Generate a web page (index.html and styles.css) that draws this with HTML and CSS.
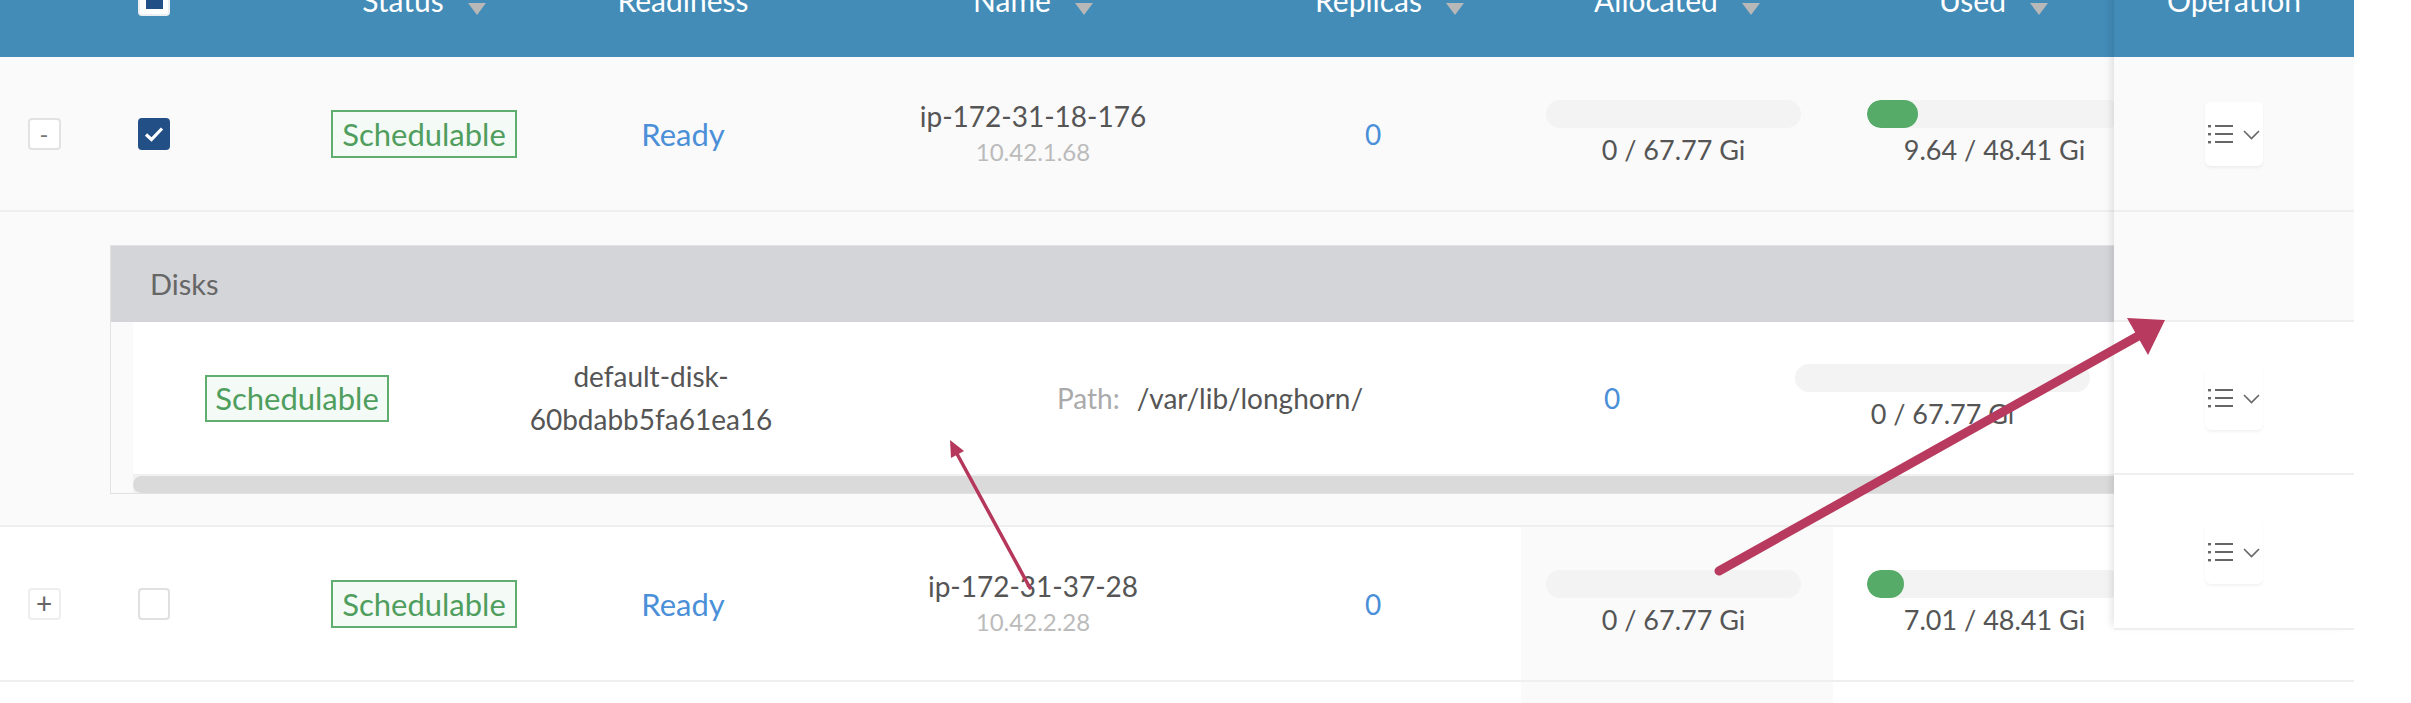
FILE: index.html
```html
<!DOCTYPE html>
<html lang="en">
<head>
    <meta charset="UTF-8">
    <title>Nodes</title>
    <link rel="stylesheet" href="styles.css">
</head>
<body>
<div class="page">
    <div class="table">
        <div class="thead grid">
            <div class="cell"></div>
            <div class="cell"><span class="check check-partial"><i></i></span></div>
            <div class="cell">Status<span class="sort"></span></div>
            <div class="cell">Readiness</div>
            <div class="cell">Name<span class="sort"></span></div>
            <div class="cell col-replicas">Replicas<span class="sort"></span></div>
            <div class="cell">Allocated<span class="sort"></span></div>
            <div class="cell">Used<span class="sort"></span></div>
            <div class="cell">Operation</div>
        </div>

        <div class="tr grid tr-grey">
            <div class="cell"><span class="expander">-</span></div>
            <div class="cell">
                <span class="check check-on">
                    <svg width="20" height="16" viewBox="0 0 20 16"><path d="M2 8.5 L7.5 13.5 L18 2.5" fill="none" stroke="#fff" stroke-width="3.2"/></svg>
                </span>
            </div>
            <div class="cell"><span class="tag">Schedulable</span></div>
            <div class="cell"><span class="link">Ready</span></div>
            <div class="cell">
                <span class="host">ip-172-31-18-176</span>
                <span class="ip">10.42.1.68</span>
            </div>
            <div class="cell col-replicas"><span class="num">0</span></div>
            <div class="cell usage alloc">
                <div class="bar"><div class="fill" style="width:0%"></div></div>
                <div class="usage-text">0 / 67.77 Gi</div>
            </div>
            <div class="cell usage used">
                <div class="bar"><div class="fill" style="width:19.9%"></div></div>
                <div class="usage-text">9.64 / 48.41 Gi</div>
            </div>
            <div class="cell"></div>
        </div>

        <div class="expanded">
            <div class="disks">
                <div class="disks-head">Disks</div>
                <div class="disks-body">
                    <div class="disk-row">
                        <div class="cell"><span class="tag tag-sm">Schedulable</span></div>
                        <div class="cell"><span class="disk-name">default-disk-<wbr>60bdabb5fa61ea16</span></div>
                        <div class="cell"><span class="path-label">Path:</span><span>/var/lib/longhorn/</span></div>
                        <div class="cell col-disk-replicas"><span class="num">0</span></div>
                        <div class="cell usage disk-usage">
                            <div class="bar"><div class="fill" style="width:0%"></div></div>
                            <div class="usage-text">0 / 67.77 Gi</div>
                        </div>
                    </div>
                    <div class="scroll-track"><div class="scroll-thumb"></div></div>
                </div>
            </div>
        </div>

        <div class="tr grid">
            <div class="cell"><span class="expander expander-plus">+</span></div>
            <div class="cell"><span class="check"></span></div>
            <div class="cell"><span class="tag">Schedulable</span></div>
            <div class="cell"><span class="link">Ready</span></div>
            <div class="cell">
                <span class="host">ip-172-31-37-28</span>
                <span class="ip">10.42.2.28</span>
            </div>
            <div class="cell col-replicas"><span class="num">0</span></div>
            <div class="cell usage alloc sorted">
                <div class="bar"><div class="fill" style="width:0%"></div></div>
                <div class="usage-text">0 / 67.77 Gi</div>
            </div>
            <div class="cell usage used">
                <div class="bar"><div class="fill" style="width:14.5%"></div></div>
                <div class="usage-text">7.01 / 48.41 Gi</div>
            </div>
            <div class="cell"></div>
        </div>

        <div class="tr grid">
            <div class="cell"></div><div class="cell"></div><div class="cell"></div>
            <div class="cell"></div><div class="cell"></div><div class="cell"></div>
            <div class="cell sorted"></div><div class="cell"></div><div class="cell"></div>
        </div>
    </div>

    <!-- fixed right column, drawn over the table -->
    <div class="fixed">
        <div class="fixed-head">Operation</div>
        <div class="fixed-row fr-1 tr-grey">
            <span class="op">
                <svg width="25" height="20" viewBox="0 0 25 20"><g fill="#666"><rect x="0" y="1" width="3" height="2.4"/><rect x="7" y="1" width="18" height="2"/><rect x="0" y="9" width="3" height="2.4"/><rect x="7" y="9" width="18" height="2"/><rect x="0" y="17" width="3" height="2.4"/><rect x="7" y="17" width="18" height="2"/></g></svg>
                <svg width="17" height="10" viewBox="0 0 17 10"><polyline points="1,1 8.5,8.5 16,1" fill="none" stroke="#666" stroke-width="1.6"/></svg>
            </span>
        </div>
        <div class="fixed-row fr-2 tr-grey"></div>
        <div class="fixed-row fr-3">
            <span class="op">
                <svg width="25" height="20" viewBox="0 0 25 20"><g fill="#666"><rect x="0" y="1" width="3" height="2.4"/><rect x="7" y="1" width="18" height="2"/><rect x="0" y="9" width="3" height="2.4"/><rect x="7" y="9" width="18" height="2"/><rect x="0" y="17" width="3" height="2.4"/><rect x="7" y="17" width="18" height="2"/></g></svg>
                <svg width="17" height="10" viewBox="0 0 17 10"><polyline points="1,1 8.5,8.5 16,1" fill="none" stroke="#666" stroke-width="1.6"/></svg>
            </span>
        </div>
        <div class="fixed-row fr-4">
            <span class="op">
                <svg width="25" height="20" viewBox="0 0 25 20"><g fill="#666"><rect x="0" y="1" width="3" height="2.4"/><rect x="7" y="1" width="18" height="2"/><rect x="0" y="9" width="3" height="2.4"/><rect x="7" y="9" width="18" height="2"/><rect x="0" y="17" width="3" height="2.4"/><rect x="7" y="17" width="18" height="2"/></g></svg>
                <svg width="17" height="10" viewBox="0 0 17 10"><polyline points="1,1 8.5,8.5 16,1" fill="none" stroke="#666" stroke-width="1.6"/></svg>
            </span>
        </div>
    </div>

    <!-- annotation arrows -->
    <svg class="annot" width="2411" height="703" viewBox="0 0 2411 703">
        <line x1="1030" y1="588" x2="956" y2="452" stroke="#b5375b" stroke-width="3.5" stroke-linecap="round"/>
        <polygon points="950,440 964,451 951,458" fill="#b5375b"/>
        <line x1="1719" y1="571" x2="2140" y2="335" stroke="#b83a5e" stroke-width="9" stroke-linecap="round"/>
        <polygon points="2165,320 2127,318 2148,355" fill="#b83a5e"/>
    </svg>
</div>
</body>
</html>
```

FILE: styles.css
```css
* {
    box-sizing: border-box;
    margin: 0;
    padding: 0;
}
body {
    background: #fff;
    font-family: Lato, "Open Sans", sans-serif;
    color: #555;
}
.page {
    position: relative;
    width: 2411px;
    height: 703px;
    overflow: hidden;
}

/* main table */
.table {
    width: 2354px;
    margin-top: -43px;
}
.grid {
    display: grid;
    grid-template-columns: 88px 132px 408px 110px 590px 193px 312px 321px 200px;
}
.thead {
    height: 100px;
    padding-top: 27px;
    background: #428cb7;
    color: #fff;
    font-size: 30px;
    line-height: 32px;
}
.thead .cell {
    display: flex;
    justify-content: center;
    align-items: flex-start;
    white-space: nowrap;
}
.thead .col-replicas {
    padding-right: 70px;
}
.sort {
    width: 0;
    height: 0;
    margin: 19px 0 0 24px;
    border-left: 9px solid transparent;
    border-right: 9px solid transparent;
    border-top: 12px solid #b8b8b8;
}

.tr {
    height: 155px;
    border-bottom: 2px solid #efefef;
}
.tr .cell {
    display: flex;
    flex-direction: column;
    align-items: center;
    justify-content: center;
}
.tr-grey {
    background: #fafafa;
}
.tr .sorted {
    background: #fafafa;
}
.tr .col-replicas {
    padding-right: 103px;
}

.expander {
    display: block;
    width: 33px;
    height: 32px;
    border: 2px solid #e2e2e2;
    border-radius: 4px;
    background: #fff;
    color: #777;
    font-size: 24px;
    line-height: 27px;
    text-align: center;
}
.expander-plus {
    border-color: #eee;
    color: #666;
    font-size: 28px;
}
.check {
    display: flex;
    align-items: center;
    justify-content: center;
    width: 32px;
    height: 32px;
    border: 2px solid #e0e0e0;
    border-radius: 4px;
    background: #fff;
}
.check-on {
    background: #234f87;
    border-color: #234f87;
}
.check-partial {
    border-color: #eceff2;
}
.check-partial i {
    display: block;
    width: 17px;
    height: 17px;
    background: #234f87;
}

.tag {
    display: block;
    padding: 0 9px;
    border: 2px solid #5fae6f;
    background: #f4faf5;
    color: #4f9e5e;
    font-size: 31px;
    line-height: 44px;
}
.tag-sm {
    padding: 0 8px;
    line-height: 43px;
}
.link {
    color: #4a8fd8;
    font-size: 31px;
}
.num {
    color: #4a8fd8;
    font-size: 28px;
}
.host {
    font-size: 28px;
    line-height: 36px;
    color: #555;
}
.ip {
    font-size: 24px;
    line-height: 36px;
    color: #bbb;
}

.tr .usage {
    align-items: stretch;
}
.alloc {
    padding: 0 32px 0 25px;
}
.used {
    padding: 0 32px 0 34px;
}
.bar {
    height: 28px;
    border-radius: 14px;
    background: #f3f3f3;
    overflow: hidden;
}
.fill {
    height: 100%;
    border-radius: 14px;
    background: #57ab68;
}
.usage-text {
    margin-top: 4px;
    font-size: 27px;
    line-height: 36px;
    text-align: center;
    color: #555;
}

/* expanded disks row */
.expanded {
    height: 315px;
    padding: 33px 14px 0 110px;
    background: #fafafa;
    border-bottom: 2px solid #efefef;
}
.disks {
    border: 1px solid #e2e2e2;
}
.disks-head {
    height: 76px;
    padding-left: 39px;
    background: #d4d5d9;
    color: #666;
    font-size: 29px;
    line-height: 76px;
}
.disks-body {
    padding-left: 22px;
    background: #fafafa;
}
.disk-row {
    display: grid;
    grid-template-columns: 328px 380px 738px 186px 355px;
    height: 152px;
    background: #fff;
}
.disk-row .cell {
    display: flex;
    align-items: center;
    justify-content: center;
    font-size: 28px;
    color: #555;
}
.disk-name {
    max-width: 300px;
    text-align: center;
    line-height: 43px;
}
.path-label {
    margin-right: 17px;
    color: #aaa;
}
.disk-row .col-disk-replicas {
    padding-right: 120px;
}
.disk-row .disk-usage {
    flex-direction: column;
    align-items: stretch;
    padding: 0 30px;
}
.scroll-track {
    height: 19px;
    padding-top: 2px;
    background: #f1f1f1;
}
.scroll-thumb {
    height: 17px;
    border-radius: 9px;
    background: #dadada;
}

/* fixed operation column */
.fixed {
    position: absolute;
    top: -43px;
    left: 2114px;
    width: 240px;
    box-shadow: -6px 0 8px -4px rgba(0, 0, 0, 0.12);
}
.fixed-head {
    height: 100px;
    padding-top: 27px;
    background: #428cb7;
    color: #fff;
    font-size: 30px;
    line-height: 32px;
    text-align: center;
}
.fixed-row {
    display: flex;
    align-items: center;
    justify-content: center;
    background: #fff;
    border-bottom: 2px solid #efefef;
}
.fixed-row.tr-grey {
    background: #fafafa;
}
.fr-1 { height: 155px; }
.fr-2 { height: 110px; }
.fr-3 { height: 153px; }
.fr-4 { height: 155px; }
.op {
    display: flex;
    align-items: center;
    gap: 10px;
    width: 58px;
    height: 64px;
    padding-left: 3px;
    border-radius: 6px;
    background: #fff;
    box-shadow: 0 2px 3px rgba(0, 0, 0, 0.05);
}
.op svg:last-child {
    margin-top: 2px;
}

.annot {
    position: absolute;
    top: 0;
    left: 0;
    pointer-events: none;
}
```
